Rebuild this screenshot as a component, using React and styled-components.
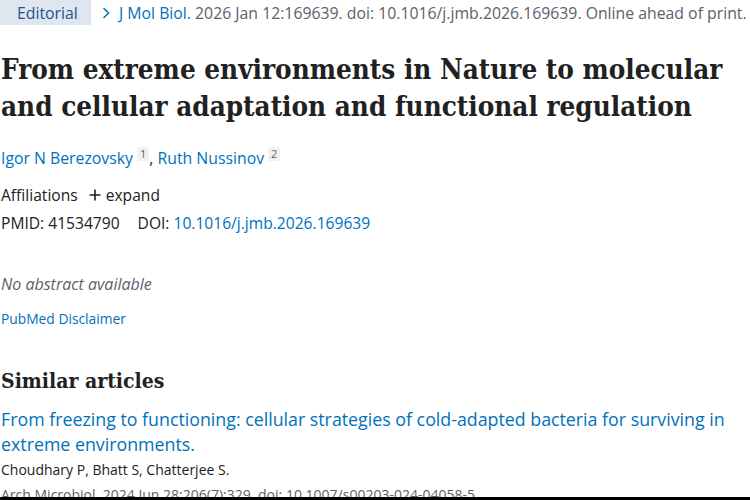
import React from 'react'
import styled, { createGlobalStyle } from 'styled-components'

const GlobalStyle = createGlobalStyle`
  html, body { margin: 0; padding: 0; background: #fff; }
  body { font-family: "Open Sans", "Noto Sans", sans-serif; color: #212121; overflow: hidden; }
`

const Page = styled.div`
  height: 497px;
  overflow: hidden;
  border-bottom: 3px solid #000;
  padding-left: 1px;
`

const HeadingRow = styled.div`
  display: flex;
  align-items: center;
  height: 25px;
  margin-left: -1px;
  font-size: 15.8px;
  white-space: nowrap;
`

const TypeBadge = styled.span`
  display: inline-flex;
  align-items: center;
  width: 91px;
  height: 25px;
  padding-left: 17px;
  box-sizing: border-box;
  background: #dfe6ef;
  color: #205493;
`

const Citation = styled.span`
  display: inline-flex;
  align-items: center;
  gap: 8px;
  margin-left: 10px;
  color: #5b616b;
`

const JournalLink = styled.a`
  color: #0071bc;
  text-decoration: none;
`

const Title = styled.h1`
  margin: 26px 0 0;
  font-family: "DejaVu Serif Condensed", "DejaVu Serif", serif;
  font-stretch: condensed;
  font-weight: 700;
  font-size: 27.6px;
  line-height: 37px;
  color: #212121;
`

const Authors = styled.div`
  margin-top: 22px;
  font-size: 15.8px;
  line-height: 22px;
  color: #212121;
`

const Link = styled.a`
  color: #0071bc;
  text-decoration: none;
`

const Sup = styled.sup`
  display: inline-block;
  margin-left: 4px;
  padding: 0 3px;
  font-size: 11px;
  line-height: 14px;
  vertical-align: 6px;
  background: #f1f1f1;
  color: #5b616b;
`

const MetaLine = styled.div`
  display: flex;
  align-items: center;
  gap: ${p => p.$gap || 0}px;
  margin-top: ${p => p.$top || 0}px;
  font-size: 15.6px;
  line-height: 22px;
`

const Expand = styled.span`
  display: inline-flex;
  align-items: center;
  gap: 4px;
  color: #212121;
`

const NoAbstract = styled.p`
  margin: 39px 0 0;
  font-size: 16px;
  font-style: italic;
  line-height: 22px;
  color: #5b616b;
`

const Disclaimer = styled.a`
  display: block;
  margin-top: 14px;
  font-size: 13.8px;
  line-height: 20px;
  color: #0071bc;
  text-decoration: none;
`

const SectionTitle = styled.h2`
  margin: 38px 0 0;
  font-family: "DejaVu Serif Condensed", "DejaVu Serif", serif;
  font-stretch: condensed;
  font-weight: 700;
  font-size: 21px;
  line-height: 28px;
`

const ArticleTitle = styled.a`
  display: block;
  margin-top: 12px;
  font-size: 17.8px;
  line-height: 25px;
  color: #0071bc;
  text-decoration: none;
`

const ArticleLine = styled.div`
  font-size: 14px;
  line-height: 25px;
  color: ${p => p.$muted ? '#5b616b' : '#212121'};
  white-space: nowrap;
`

const PlusIcon = () => (
  <svg width="14" height="14" viewBox="0 0 14 14" aria-hidden="true">
    <path d="M7 1.5v11M1.5 7h11" stroke="#212121" strokeWidth="1.6" />
  </svg>
)

const Chevron = () => (
  <svg width="10" height="14" viewBox="0 0 10 14" aria-hidden="true">
    <path d="M2.5 2 7.5 7l-5 5" fill="none" stroke="#0071bc" strokeWidth="1.5" />
  </svg>
)

export default function App() {
  return (
    <>
      <GlobalStyle />
      <Page>
        <HeadingRow>
          <TypeBadge>Editorial</TypeBadge>
          <Citation>
            <Chevron />
            <span>
              <JournalLink href="#">J Mol Biol.</JournalLink> 2026 Jan 12:169639. doi: 10.1016/j.jmb.2026.169639. Online ahead of print.
            </span>
          </Citation>
        </HeadingRow>

        <Title>From extreme environments in Nature to molecular and cellular adaptation and functional regulation</Title>

        <Authors>
          <Link href="#">Igor N Berezovsky</Link><Sup>1</Sup>, <Link href="#">Ruth Nussinov</Link><Sup>2</Sup>
        </Authors>

        <MetaLine $top={15} $gap={10}>
          <span>Affiliations</span>
          <Expand><PlusIcon />expand</Expand>
        </MetaLine>
        <MetaLine $top={6} $gap={18}>
          <span>PMID: 41534790</span>
          <span>DOI: <Link href="#">10.1016/j.jmb.2026.169639</Link></span>
        </MetaLine>

        <NoAbstract>No abstract available</NoAbstract>
        <Disclaimer href="#">PubMed Disclaimer</Disclaimer>

        <SectionTitle>Similar articles</SectionTitle>
        <ArticleTitle href="#">From freezing to functioning: cellular strategies of cold-adapted bacteria for surviving in extreme environments.</ArticleTitle>
        <ArticleLine>Choudhary P, Bhatt S, Chatterjee S.</ArticleLine>
        <ArticleLine $muted>Arch Microbiol. 2024 Jun 28;206(7):329. doi: 10.1007/s00203-024-04058-5.</ArticleLine>
      </Page>
    </>
  )
}
